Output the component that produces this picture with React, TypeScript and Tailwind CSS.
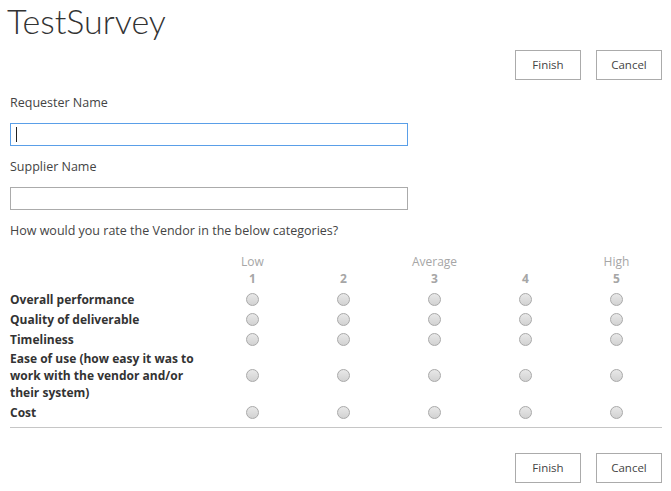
const labelFont = { fontFamily: '"Open Sans", "Liberation Sans", sans-serif' };

const categories = [
  "Overall performance",
  "Quality of deliverable",
  "Timeliness",
  "Ease of use (how easy it was to work with the vendor and/or their system)",
  "Cost",
];

const scale = [
  { top: "Low", num: "1" },
  { top: "", num: "2" },
  { top: "Average", num: "3" },
  { top: "", num: "4" },
  { top: "High", num: "5" },
];

function Radio() {
  return (
    <span className="block h-[13px] w-[13px] rounded-full border border-[#a9a9a9] bg-gradient-to-b from-[#e8e8e8] to-[#d2d2d2]" />
  );
}

function Buttons() {
  return (
    <div className="flex justify-end gap-[15px]">
      <button className="h-[30px] w-[66px] border border-[#ababab] bg-white text-[11.5px] text-[#444]">
        Finish
      </button>
      <button className="h-[30px] w-[66px] border border-[#ababab] bg-white text-[11.5px] text-[#444]">
        Cancel
      </button>
    </div>
  );
}

export default function App() {
  return (
    <div className="min-h-screen bg-white text-[#444]" style={labelFont}>
      <div className="pl-[7px] pr-[9px]">
        <h1
          className="h-[42px] text-[34px] font-light leading-[42px] text-[#333]"
          style={{ fontFamily: 'Lato, "Open Sans", sans-serif' }}
        >
          TestSurvey
        </h1>

        <div className="mt-[8px]">
          <Buttons />
        </div>

        <div className="pl-[3px]">
          <div className="mt-[14px] text-[12.5px] leading-[18px]">Requester Name</div>
          <div className="mt-[11px] flex h-[23px] w-[398px] items-center border border-[#5a9fe8] px-[5px]">
            <span className="h-[15px] w-px bg-[#222]" />
          </div>

          <div className="mt-[12px] text-[12.5px] leading-[18px]">Supplier Name</div>
          <div className="mt-[11px] h-[23px] w-[398px] border border-[#ababab]" />

          <div className="mt-[12px] text-[12.5px] leading-[18px]">
            How would you rate the Vendor in the below categories?
          </div>

          <div className="mt-[13px] grid grid-cols-[197px_repeat(5,91px)] text-[12px]">
            <div />
            {scale.map((s) => (
              <div key={s.num} className="flex flex-col items-center pb-[2px] text-[#a6a6a6]">
                <span className="h-[17px] leading-[17px]">{s.top}</span>
                <span className="h-[17px] font-bold leading-[17px]">{s.num}</span>
              </div>
            ))}

            {categories.map((c) => (
              <div key={c} className="contents">
                <div className="flex min-h-[20px] items-center pr-1 font-bold leading-[17px] text-[#333]">
                  <span className="py-px">{c}</span>
                </div>
                {scale.map((s) => (
                  <div key={s.num} className="flex items-center justify-center">
                    <Radio />
                  </div>
                ))}
              </div>
            ))}
          </div>

          <div className="mt-[5px] border-t border-[#c6c6c6]" />
        </div>

        <div className="mt-[25px]">
          <Buttons />
        </div>
      </div>
    </div>
  );
}
